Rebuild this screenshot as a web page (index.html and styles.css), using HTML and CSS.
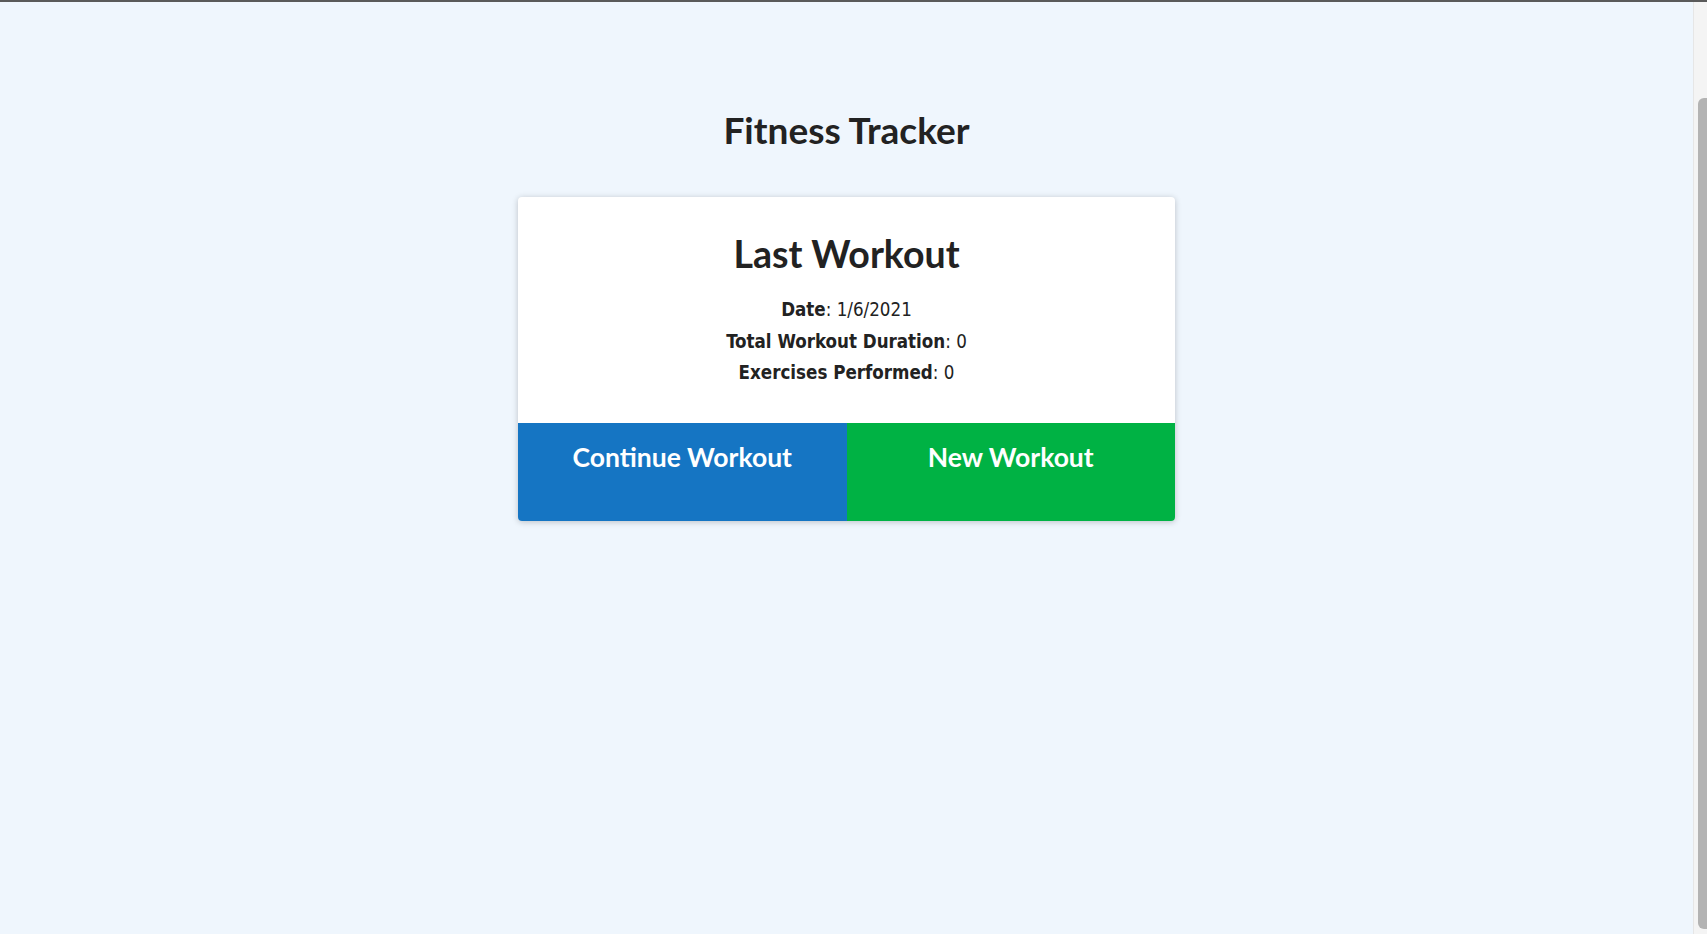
FILE: index.html
```html
<!DOCTYPE html>
<html lang="en">
<head>
<meta charset="utf-8">
<title>Fitness Tracker</title>
<link rel="stylesheet" href="styles.css">
</head>
<body>
<div class="topline"></div>
<div class="frame">
  <main class="page">
    <h1 class="title">Fitness Tracker</h1>
    <section class="card">
      <div class="card-body">
        <h2 class="card-title">Last Workout</h2>
        <p class="stat"><strong>Date</strong>: 1/6/2021</p>
        <p class="stat"><strong>Total Workout Duration</strong>: 0</p>
        <p class="stat"><strong>Exercises Performed</strong>: 0</p>
      </div>
      <div class="actions">
        <button class="btn btn-continue">Continue Workout</button>
        <button class="btn btn-new">New Workout</button>
      </div>
    </section>
  </main>
  <aside class="scrollbar"><div class="thumb"></div></aside>
</div>
</body>
</html>
```
FILE: styles.css
```css
html, body {
  margin: 0;
  height: 100%;
}
body {
  background: #eff6fd;
  font-family: Lato, "Liberation Sans", sans-serif;
  color: #1f1f1f;
  display: flex;
  flex-direction: column;
  overflow: hidden;
}
.topline {
  height: 2px;
  background: #5a5a5a;
  flex: none;
}
.frame {
  flex: 1;
  display: flex;
  min-height: 0;
}
.page {
  flex: 1;
  padding-top: 107px;
}
.title {
  margin: 0;
  text-align: center;
  font-size: 37px;
  line-height: 42px;
  font-weight: 700;
  color: #222;
}
.card {
  width: 657px;
  margin: 46px auto 0;
  background: #fff;
  border-radius: 4px;
  box-shadow: 0 1px 6px rgba(0, 0, 0, 0.22);
  overflow: hidden;
}
.card-body {
  padding: 35px 0 34px;
  text-align: center;
}
.card-title {
  margin: 0 0 18px;
  font-size: 37.5px;
  line-height: 44px;
  font-weight: 700;
  color: #222;
}
.stat {
  margin: 0;
  font-family: "DejaVu Sans Condensed", "DejaVu Sans", sans-serif;
  font-stretch: condensed;
  font-size: 18.6px;
  line-height: 31.7px;
  color: #222;
}
.stat strong {
  font-weight: 700;
}
.actions {
  display: flex;
  align-items: flex-start;
}
.btn {
  flex: 1;
  border: 0;
  margin: 0;
  padding: 18px 0 48px;
  display: block;
  text-align: center;
  font-family: Lato, "Liberation Sans", sans-serif;
  font-size: 26.5px;
  line-height: 32px;
  font-weight: 700;
  color: #fff;
  cursor: pointer;
}
.btn-continue {
  background: #1575c3;
}
.btn-new {
  background: #00b244;
}
.scrollbar {
  width: 14px;
  flex: none;
  background: #f4f4f4;
  border-left: 1px solid #e6e6e6;
  box-sizing: border-box;
  padding: 96px 0 5px 4px;
  display: flex;
}
.thumb {
  flex: 1;
  background: #b3b3b3;
  border-radius: 6px 0 0 6px;
}
```
